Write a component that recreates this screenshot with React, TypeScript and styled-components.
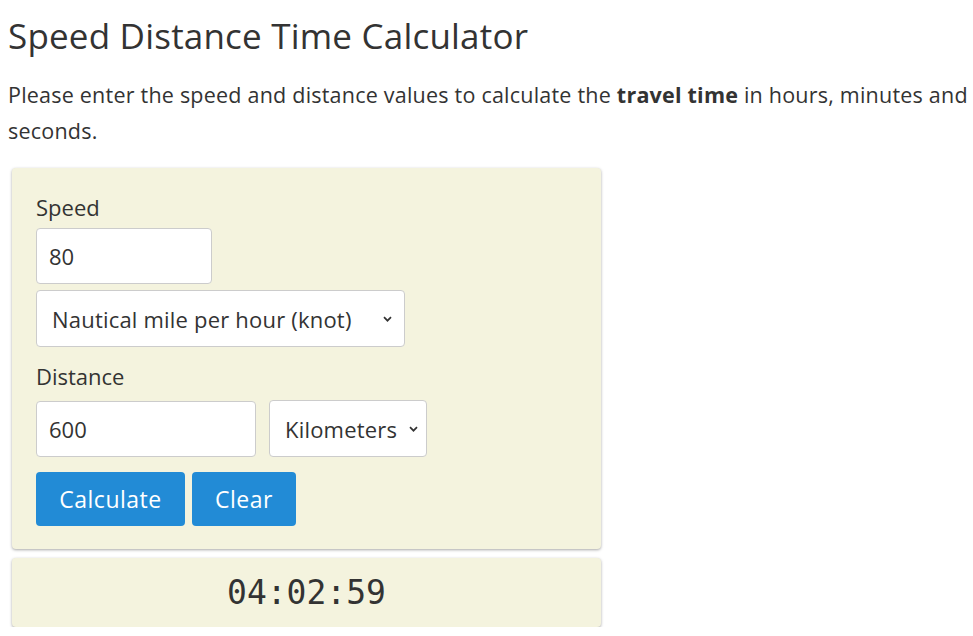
import React, { useState } from "react";
import styled, { createGlobalStyle } from "styled-components";

const Global = createGlobalStyle`
  html, body { margin: 0; padding: 0; background: #fff; }
  body { font-family: "Open Sans", "Noto Sans", sans-serif; color: #333; }
  * { box-sizing: border-box; }
`;

const Page = styled.div`
  padding: 12px 0 0 8px;
  width: 973px;
`;

const Title = styled.h1`
  margin: 0;
  font-size: 35px;
  font-weight: 400;
  line-height: 48px;
  color: #333;
  letter-spacing: 0.2px;
`;

const Lead = styled.p`
  margin: 17px 0 0 0;
  font-size: 21.5px;
  line-height: 36px;
  letter-spacing: 0.22px;
  color: #333;
  b { font-weight: 700; }
`;

const Card = styled.div<{ $pad?: string }>`
  margin: 19px 0 0 4px;
  width: 589px;
  background: #f4f3de;
  border-radius: 4px;
  box-shadow: 0 1px 3px rgba(0, 0, 0, 0.35);
  padding: ${(p) => p.$pad || "24px 24px 23px 24px"};
  display: flex;
  flex-direction: column;
`;

const Label = styled.label<{ $mt?: number; $mb?: number }>`
  font-size: 22px;
  line-height: 30px;
  color: #333;
  margin: ${(p) => p.$mt || 0}px 0 ${(p) => p.$mb ?? 6}px 0;
`;

const Row = styled.div<{ $mt?: number }>`
  display: flex;
  align-items: center;
  gap: 13px;
  margin-top: ${(p) => p.$mt || 0}px;
`;

const Input = styled.input<{ $w: number }>`
  width: ${(p) => p.$w}px;
  height: 56px;
  border: 1px solid #ccc;
  border-radius: 4px;
  background: #fff;
  padding: 0 12px;
  font-family: inherit;
  font-size: 22px;
  color: #333;
  outline: none;
`;

const chevron =
  "url(\"data:image/svg+xml;utf8,<svg xmlns='http://www.w3.org/2000/svg' width='9' height='6' viewBox='0 0 9 6'><path d='M1 1.2l3.5 3.5 3.5-3.5' fill='none' stroke='%23333' stroke-width='1.7'/></svg>\")";

const Select = styled.select<{ $w: number; $chev: number }>`
  appearance: none;
  -webkit-appearance: none;
  width: ${(p) => p.$w}px;
  height: 57px;
  border: 1px solid #ccc;
  border-radius: 4px;
  background: #fff ${chevron} no-repeat right ${(p) => p.$chev}px center;
  padding: 0 24px 0 15px;
  font-family: inherit;
  font-size: 22px;
  letter-spacing: 0.2px;
  color: #333;
  outline: none;
`;

const Buttons = styled.div`
  display: flex;
  gap: 7px;
  margin-top: 15px;
`;

const Button = styled.button<{ $w: number }>`
  width: ${(p) => p.$w}px;
  height: 54px;
  border: none;
  border-radius: 4px;
  background: #228bd6;
  color: #fff;
  font-family: inherit;
  font-size: 23px;
  letter-spacing: 0.5px;
  cursor: pointer;
`;

const ResultCard = styled(Card)`
  margin-top: 9px;
  height: 69px;
  align-items: center;
  justify-content: center;
`;

const Result = styled.div`
  font-family: "DejaVu Sans Mono", "Liberation Mono", monospace;
  font-size: 33px;
  color: #333;
`;

export default function App() {
  const [speed, setSpeed] = useState("80");
  const [dist, setDist] = useState("600");
  return (
    <Page>
      <Global />
      <Title>Speed Distance Time Calculator</Title>
      <Lead>
        Please enter the speed and distance values to calculate the <b>travel time</b> in hours, minutes and
        seconds.
      </Lead>
      <Card>
        <Label>Speed</Label>
        <Input $w={176} value={speed} onChange={(e) => setSpeed(e.target.value)} />
        <Row $mt={6}>
          <Select $w={369} $chev={12} defaultValue="knot">
            <option value="knot">Nautical mile per hour (knot)</option>
            <option value="kmh">Kilometers per hour</option>
          </Select>
        </Row>
        <Label $mt={14} $mb={9}>Distance</Label>
        <Row>
          <Input $w={220} value={dist} onChange={(e) => setDist(e.target.value)} />
          <Select $w={158} $chev={8} defaultValue="km">
            <option value="km">Kilometers</option>
            <option value="mi">Miles</option>
          </Select>
        </Row>
        <Buttons>
          <Button $w={149}>Calculate</Button>
          <Button $w={104}>Clear</Button>
        </Buttons>
      </Card>
      <ResultCard $pad="0">
        <Result>04:02:59</Result>
      </ResultCard>
    </Page>
  );
}
